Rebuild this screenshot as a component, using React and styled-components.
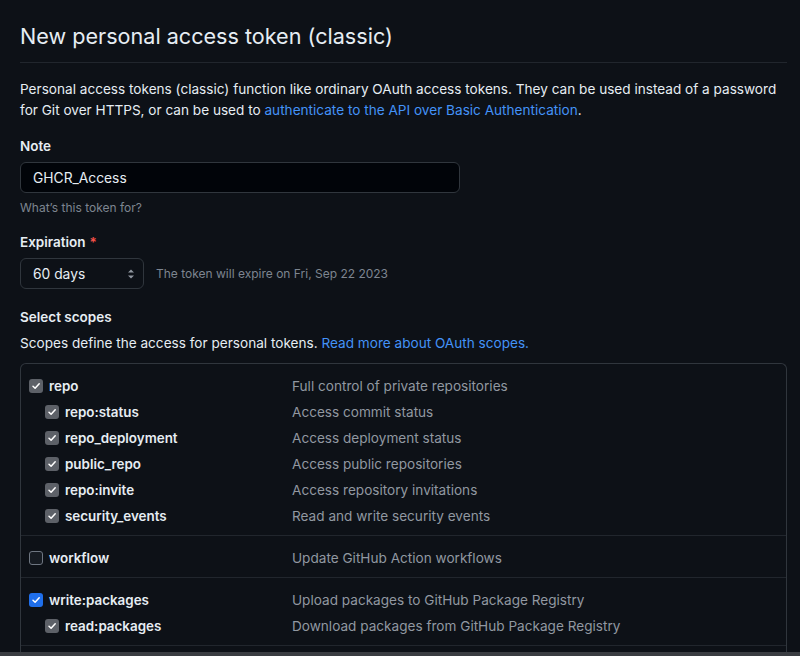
import React from "react";
import styled, { createGlobalStyle } from "styled-components";

const Global = createGlobalStyle`
  html, body { margin: 0; padding: 0; background: #0d1117; }
  body { font-family: Inter, "Liberation Sans", Arial, sans-serif; color: #e6edf3; }
  * { box-sizing: border-box; }
`;

const Page = styled.div`
  height: 656px;
  display: flex;
  flex-direction: column;
  overflow: hidden;
  background: #0d1117;
`;

const Content = styled.div`
  flex: 1;
  overflow: hidden;
  padding: 0 13px 0 20px;
`;

const BottomStrip = styled.div`
  height: 4px;
  flex: none;
  background: #3a3d42;
`;

const Title = styled.h1`
  margin: 0;
  padding: 22px 0 12px;
  font-size: 21.6px;
  font-weight: 400;
  line-height: 28px;
  color: #e6edf3;
  border-bottom: 1px solid #21262d;
`;

const Intro = styled.p`
  margin: 16px 0 0;
  font-size: 13.6px;
  line-height: 21px;
  color: #e6edf3;
`;

const Link = styled.a`
  color: #4493f8;
  text-decoration: none;
`;

const Field = styled.div`
  margin-top: ${(p) => p.$mt || 18}px;
  display: flex;
  flex-direction: column;
`;

const Label = styled.label`
  font-size: 13.5px;
  font-weight: 600;
  line-height: 20px;
  margin-bottom: 6px;
`;

const Required = styled.span`
  color: #f85149;
  margin-left: 4px;
`;

const TextInput = styled.div`
  width: 440px;
  height: 31px;
  background: #010409;
  border: 1px solid #30363d;
  border-radius: 6px;
  padding: 0 12px;
  display: flex;
  align-items: center;
  font-size: 13.8px;
  color: #e6edf3;
`;

const Hint = styled.div`
  margin-top: 7px;
  font-size: 12px;
  line-height: 16px;
  color: #7d8590;
`;

const SelectRow = styled.div`
  display: flex;
  align-items: center;
  gap: 12px;
`;

const Select = styled.div`
  width: 124px;
  height: 31px;
  background: #0d1117;
  border: 1px solid #30363d;
  border-radius: 6px;
  padding: 0 8px 0 12px;
  display: flex;
  align-items: center;
  justify-content: space-between;
  font-size: 13.8px;
  color: #e6edf3;
`;

const Note = styled.span`
  font-size: 12px;
  color: #7d8590;
`;

const SectionTitle = styled.div`
  margin-top: 18px;
  font-size: 13.5px;
  font-weight: 600;
  line-height: 20px;
`;

const SectionDesc = styled.div`
  margin-top: 6px;
  font-size: 13.6px;
  line-height: 20px;
`;

const ScopeBox = styled.div`
  margin-top: 10px;
  border: 1px solid #30363d;
  border-radius: 6px;
  border-bottom: none;
`;

const Group = styled.div`
  padding: 9px 0 6px;
  min-height: ${(p) => (p.$empty ? 40 : 0)}px;
  & + & { border-top: 1px solid #21262d; }
`;

const Row = styled.div`
  display: flex;
  align-items: center;
  height: 26px;
`;

const NameCell = styled.div`
  width: 271px;
  display: flex;
  align-items: center;
  gap: 6px;
  padding-left: ${(p) => (p.$nested ? 24 : 8)}px;
  font-size: 13.4px;
  font-weight: 600;
  color: #e6edf3;
`;

const Desc = styled.div`
  font-size: 13.6px;
  color: #9198a1;
`;

const Box = styled.span`
  width: 14px;
  height: 14px;
  border-radius: 3px;
  flex: none;
  display: inline-flex;
  align-items: center;
  justify-content: center;
  background: ${(p) => (p.$state === "blue" ? "#1f6feb" : p.$state === "gray" ? "#5d6168" : "#161b22")};
  border: ${(p) => (p.$state === "off" ? "1.5px solid #6e7681" : "none")};
`;

function Check({ state }) {
  return (
    <Box $state={state}>
      {state !== "off" && (
        <svg width="10" height="10" viewBox="0 0 10 10">
          <path d="M2 5.2 L4.1 7.3 L8.2 2.8" fill="none" stroke="#fff" strokeWidth="1.5" strokeLinecap="round" strokeLinejoin="round" />
        </svg>
      )}
    </Box>
  );
}

function Scope({ name, desc, nested, state }) {
  return (
    <Row>
      <NameCell $nested={nested}>
        <Check state={state} />
        {name}
      </NameCell>
      <Desc>{desc}</Desc>
    </Row>
  );
}

const groups = [
  [
    ["repo", "Full control of private repositories", false, "gray"],
    ["repo:status", "Access commit status", true, "gray"],
    ["repo_deployment", "Access deployment status", true, "gray"],
    ["public_repo", "Access public repositories", true, "gray"],
    ["repo:invite", "Access repository invitations", true, "gray"],
    ["security_events", "Read and write security events", true, "gray"],
  ],
  [["workflow", "Update GitHub Action workflows", false, "off"]],
  [
    ["write:packages", "Upload packages to GitHub Package Registry", false, "blue"],
    ["read:packages", "Download packages from GitHub Package Registry", true, "gray"],
  ],
];

export default function App() {
  return (
    <Page>
      <Global />
      <Content>
        <Title>New personal access token (classic)</Title>
        <Intro>
          Personal access tokens (classic) function like ordinary OAuth access tokens. They can be used instead of a password for Git over HTTPS, or can be used to{" "}
          <Link href="#">authenticate to the API over Basic Authentication</Link>.
        </Intro>
        <Field $mt={15}>
          <Label>Note</Label>
          <TextInput>GHCR_Access</TextInput>
          <Hint>What’s this token for?</Hint>
        </Field>
        <Field $mt={16}>
          <Label>
            Expiration<Required>*</Required>
          </Label>
          <SelectRow>
            <Select>
              60 days
              <svg width="8" height="12" viewBox="0 0 8 12">
                <path d="M1 4.5 L4 1.5 L7 4.5 Z M1 7.5 L4 10.5 L7 7.5 Z" fill="#9198a1" />
              </svg>
            </Select>
            <Note>The token will expire on Fri, Sep 22 2023</Note>
          </SelectRow>
        </Field>
        <SectionTitle>Select scopes</SectionTitle>
        <SectionDesc>
          Scopes define the access for personal tokens. <Link href="#">Read more about OAuth scopes.</Link>
        </SectionDesc>
        <ScopeBox>
          {groups.map((g, i) => (
            <Group key={i}>
              {g.map(([n, d, nested, s]) => (
                <Scope key={n} name={n} desc={d} nested={nested} state={s} />
              ))}
            </Group>
          ))}
          <Group $empty />
        </ScopeBox>
      </Content>
      <BottomStrip />
    </Page>
  );
}
